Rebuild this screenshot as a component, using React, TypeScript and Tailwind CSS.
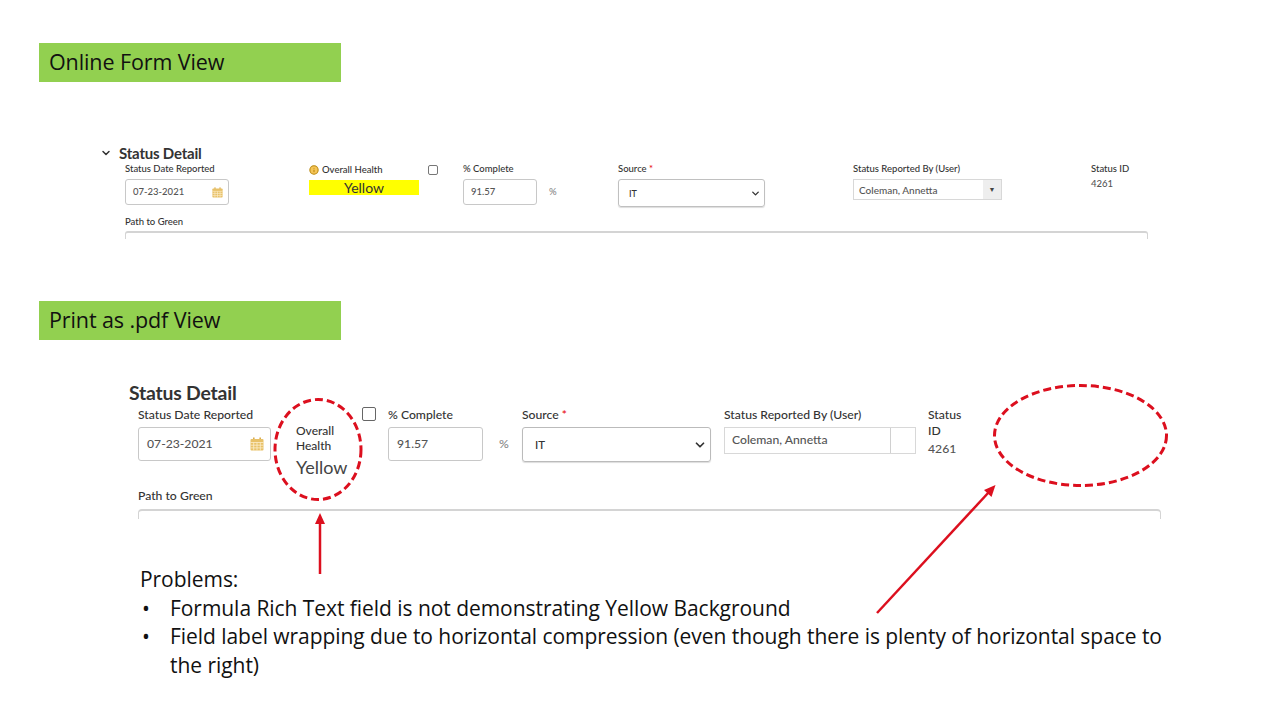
import { ChevronDown, Info } from "lucide-react";

const slideFont = { fontFamily: '"Open Sans", "Noto Sans", sans-serif' };

function Banner({ children }: { children: string }) {
  return (
    <div className="ml-[39px] flex h-[39px] w-[302px] items-center bg-[#92d050] pl-[10px] text-[21.5px] tracking-[-0.1px] text-[#111]">
      {children}
    </div>
  );
}

// gold calendar with a white grid, lucide's is only an outline
function Cal({ size }: { size: number }) {
  return (
    <svg width={size} height={size} viewBox="0 0 14 14" aria-hidden="true">
      <rect x="3" y="0.5" width="1.6" height="3" fill="#d9ac4f" />
      <rect x="9.4" y="0.5" width="1.6" height="3" fill="#d9ac4f" />
      <rect x="0.5" y="2" width="13" height="11.500" rx="1" fill="#e8c168" />
      <path d="M0.5 5.5H13.500M0.5 8.200H13.500M0.5 10.900H13.500M3.700 5.500V13.500M7 5.500V13.500M10.300 5.500V13.500" stroke="#fbeecb" strokeWidth="0.8" />
    </svg>
  );
}

function OnlineForm() {
  return (
    <div className="ml-[100px] mt-[62px] h-[95px] overflow-hidden font-['Lato',sans-serif] text-[#333]">
      <div className="flex h-[18px] items-center">
        <ChevronDown size={12} strokeWidth={3} className="text-[#333]" />
        <h2 className="ml-[7px] text-[15px] font-bold leading-none tracking-[-0.2px]">Status Detail</h2>
      </div>
      <div className="ml-[25px] flex text-[9.5px] font-medium leading-none">
        <div className="w-[184px]">
          <p className="mt-[2px] h-[12px]">Status Date Reported</p>
          <div className="mt-[3px] flex h-[26px] w-[104px] items-center justify-between rounded-[3px] border border-[#c8c8c8] pl-[7px] pr-[5px] text-[#555]">
            07-23-2021
            <Cal size={11} />
          </div>
        </div>
        <div className="w-[154px]">
          <div className="mt-[1px] flex h-[13px] items-center">
            <Info size={10} strokeWidth={2.5} className="fill-[#f5c558] text-[#b8860b]" />
            <span className="ml-[3px] w-[106px]">Overall Health</span>
            <span className="h-[10px] w-[10px] rounded-[2px] border border-[#777]" />
          </div>
          <div className="mt-[4px] flex h-[15px] w-[110px] items-center justify-center bg-[#ffff00] text-[14px] font-normal">
            Yellow
          </div>
        </div>
        <div className="w-[155px]">
          <p className="mt-[2px] h-[12px]">% Complete</p>
          <div className="mt-[3px] flex items-center">
            <div className="flex h-[26px] w-[74px] items-center rounded-[3px] border border-[#c8c8c8] pl-[7px] text-[#555]">91.57</div>
            <span className="ml-[12px] text-[#888]">%</span>
          </div>
        </div>
        <div className="w-[235px]">
          <p className="mt-[2px] h-[12px]">
            Source <span className="text-red-600">*</span>
          </p>
          <div className="mt-[3px] flex h-[28px] w-[147px] items-center justify-between rounded-[3px] border border-[#c0c0c0] pl-[10px] pr-[3px] text-[9px] shadow-[0_1px_1px_#ddd]">
            IT
            <ChevronDown size={11} strokeWidth={3} />
          </div>
        </div>
        <div className="w-[238px]">
          <p className="mt-[2px] h-[12px]">Status Reported By (User)</p>
          <div className="mt-[3px] flex h-[21px] w-[149px] items-center border border-[#d8d8d8] pl-[5px] text-[10px] text-[#555]">
            <span className="flex-1">Coleman, Annetta</span>
            <span className="flex h-full w-[18px] items-center justify-center bg-[#eee] text-[7px] text-[#444]">▼</span>
          </div>
        </div>
        <div>
          <p className="mt-[2px] h-[12px]">Status ID</p>
          <p className="mt-[3px] text-[#555]">4261</p>
        </div>
      </div>
      <p className="ml-[25px] mt-[10px] text-[9.5px] font-medium leading-none">Path to Green</p>
      <div className="ml-[25px] mt-[4px] h-[20px] w-[1023px] rounded-t-[3px] border-x border-t-2 border-[#d4d4d4]" />
    </div>
  );
}

function PrintForm() {
  return (
    <div className="ml-[129px] mt-[41px] h-[138px] overflow-hidden font-['Lato',sans-serif] text-[#333]">
      <h2 className="mb-[-2px] h-[24px] text-[19.4px] font-bold leading-[24px] tracking-[-0.2px]">Status Detail</h2>
      <div className="ml-[9px] flex text-[12.2px] font-medium leading-none">
        <div className="w-[158px]">
          <p className="mt-[6px] h-[14px]">Status Date Reported</p>
          <div className="mt-[4px] flex h-[34px] w-[133px] items-center justify-between rounded-[3px] border border-[#c8c8c8] pl-[8px] pr-[6px] text-[#555]">
            07-23-2021
            <Cal size={14} />
          </div>
        </div>
        <div className="w-[66px]">
          <div className="mt-[20px] text-[12px] leading-[15px]">
            Overall
            <br />
            Health
          </div>
          <div className="mt-[3px] text-[18px] font-normal leading-[22px] text-[#444]">Yellow</div>
        </div>
        <div className="w-[26px]">
          <span className="mt-[4px] block h-[14px] w-[14px] rounded-[2px] border border-[#666]" />
        </div>
        <div className="w-[134px]">
          <p className="mt-[6px] h-[14px]">% Complete</p>
          <div className="mt-[4px] flex items-center">
            <div className="flex h-[34px] w-[95px] items-center rounded-[3px] border border-[#c8c8c8] pl-[8px] text-[#555]">91.57</div>
            <span className="ml-[16px] text-[#888]">%</span>
          </div>
        </div>
        <div className="w-[202px]">
          <p className="mt-[6px] h-[14px]">
            Source <span className="text-red-600">*</span>
          </p>
          <div className="mt-[4px] flex h-[35px] w-[189px] items-center justify-between rounded-[3px] border border-[#bbb] pl-[12px] pr-[3px] text-[11.5px] shadow-[0_1px_1px_#ddd]">
            IT
            <ChevronDown size={14} strokeWidth={3} />
          </div>
        </div>
        <div className="w-[204px]">
          <p className="mt-[6px] h-[14px]">Status Reported By (User)</p>
          <div className="mt-[4px] flex h-[27px] w-[192px] items-center border border-[#d8d8d8] pl-[7px] text-[#555]">
            <span className="flex-1">Coleman, Annetta</span>
            <span className="h-full w-[25px] border-l border-[#d0d0d0]" />
          </div>
        </div>
        <div>
          <p className="mt-[4px] w-[40px] leading-[16px]">Status ID</p>
          <p className="mt-[4px] text-[#555]">4261</p>
        </div>
      </div>
      <p className="ml-[9px] mt-[12px] text-[12.2px] font-medium leading-none">Path to Green</p>
      <div className="ml-[9px] mt-[7px] h-[20px] w-[1023px] rounded-t-[4px] border-x border-t-2 border-[#d4d4d4]" />
    </div>
  );
}

// red call-outs drawn over the slide
function Annotations() {
  return (
    <svg className="absolute left-0 top-0" width={1280} height={720} fill="none" stroke="#dc0f1e" aria-hidden="true">
      <ellipse cx={318} cy={449.5} rx={43} ry={50} strokeWidth={3} strokeDasharray="8 4" />
      <ellipse cx={1080.5} cy={435.5} rx={86} ry={50} strokeWidth={3} strokeDasharray="8 4" />
      <path d="M320 574V522" strokeWidth={2.5} />
      <path d="M320 513l-5 11h10z" fill="#dc0f1e" stroke="none" />
      <path d="M877 613L989 492" strokeWidth={2.5} />
      <path d="M995.500 485l-11.500 5 7.500 7z" fill="#dc0f1e" stroke="none" />
    </svg>
  );
}

export default function App() {
  return (
    <div className="relative h-[720px] w-[1280px] overflow-hidden bg-white pt-[43px]" style={slideFont}>
      <Banner>Online Form View</Banner>
      <OnlineForm />
      <div className="mt-[62px]">
        <Banner>Print as .pdf View</Banner>
      </div>
      <PrintForm />
      <div className="ml-[140px] mt-[46px] w-[1040px] text-[21px] leading-[28.5px] tracking-[-0.05px] text-[#111]">
        <p>Problems:</p>
        <ul>
          <li className="flex">
            <span className="w-[30px] pl-[2px]">•</span>
            <span className="flex-1">Formula Rich Text field is not demonstrating Yellow Background</span>
          </li>
          <li className="flex">
            <span className="w-[30px] pl-[2px]">•</span>
            <span className="flex-1">
              Field label wrapping due to horizontal compression (even though there is plenty of horizontal space to the right)
            </span>
          </li>
        </ul>
      </div>
      <Annotations />
    </div>
  );
}
